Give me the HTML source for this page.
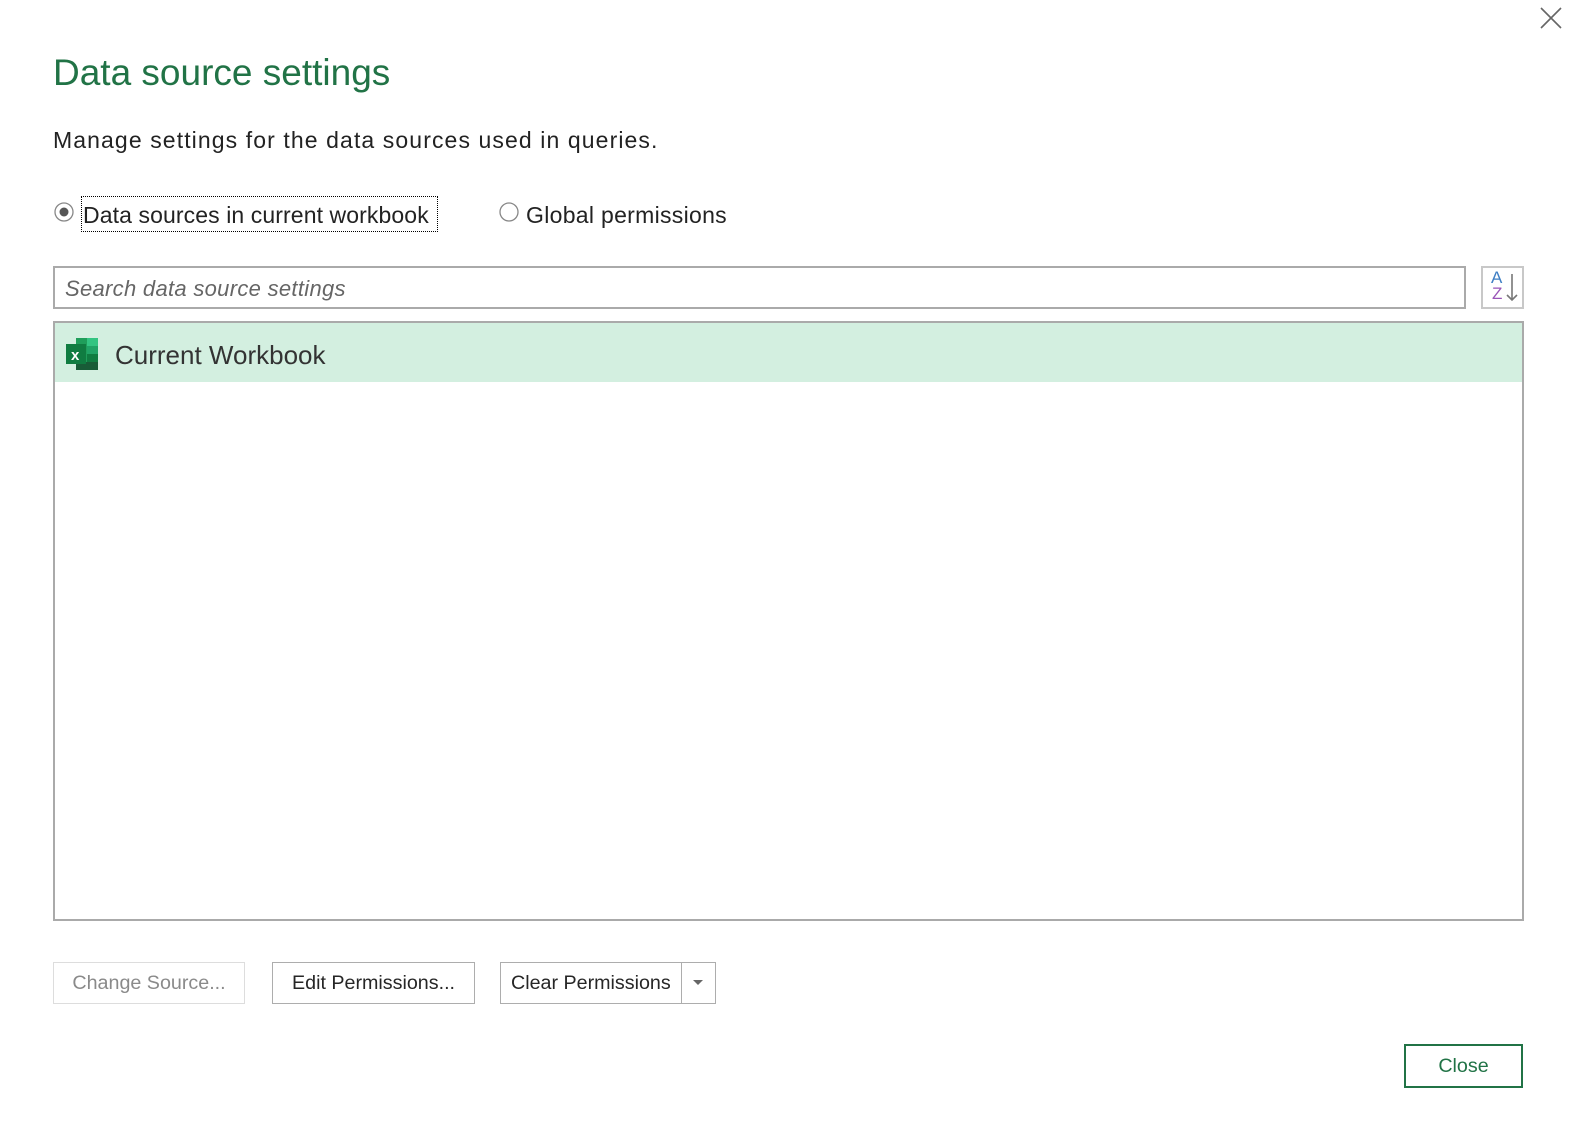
<!DOCTYPE html>
<html><head><meta charset="utf-8"><style>
body{margin:0;width:1578px;height:1136px;background:#fff;position:relative;font-family:"Liberation Sans",sans-serif;color:#333;overflow:hidden}
.a{position:absolute;white-space:nowrap}
.btn{position:absolute;box-sizing:border-box;border:1px solid #adadad;background:#fff;font-size:19.7px;text-align:center;line-height:40px;color:#262626}
</style></head><body>
<svg class="a" style="left:1539px;top:6px" width="24" height="24"><path d="M2 2L22 22M22 2L2 22" stroke="#666" stroke-width="1.6"/></svg>
<div class="a" style="left:53px;top:52px;font-size:37px;color:#217346;font-weight:300">Data source settings</div>
<div class="a" style="left:53px;top:127px;font-size:23px;color:#222;letter-spacing:1.1px">Manage settings for the data sources used in queries.</div>
<svg class="a" style="left:53px;top:201px" width="22" height="22"><circle cx="11" cy="11" r="9" fill="#fff" stroke="#888" stroke-width="1.3"/><circle cx="11" cy="11" r="4.5" fill="#555"/></svg>
<div class="a" style="left:81px;top:196px;width:357px;height:36px;border:1px dotted #000;box-sizing:border-box"></div>
<div class="a" style="left:83px;top:202px;font-size:23px;color:#222;letter-spacing:0.1px">Data sources in current workbook</div>
<svg class="a" style="left:498px;top:201px" width="22" height="22"><circle cx="11" cy="11" r="9" fill="#fff" stroke="#888" stroke-width="1.3"/></svg>
<div class="a" style="left:526px;top:202px;font-size:23px;color:#222;letter-spacing:0.3px">Global permissions</div>
<div class="a" style="left:53px;top:266px;width:1413px;height:43px;border:2px solid #aaa;box-sizing:border-box"></div>
<div class="a" style="left:65px;top:276px;font-size:22px;font-style:italic;color:#666;letter-spacing:0.3px">Search data source settings</div>
<div class="a" style="left:1481px;top:266px;width:43px;height:43px;border:2px solid #c8c8c8;box-sizing:border-box"></div>
<div class="a" style="left:1491px;top:270px;font-size:17px;line-height:16px;color:#3f7fc4">A</div>
<div class="a" style="left:1492px;top:286px;font-size:17px;line-height:16px;color:#9a55b8">Z</div>
<svg class="a" style="left:1504px;top:272px" width="16" height="32"><path d="M8 2V28M3 23L8 28L13 23" stroke="#777" stroke-width="1.6" fill="none"/></svg>
<div class="a" style="left:53px;top:321px;width:1471px;height:600px;border:2px solid #aaa;box-sizing:border-box"></div>
<div class="a" style="left:55px;top:323px;width:1467px;height:59px;background:#d3efe0"></div>
<svg class="a" style="left:66px;top:338px" width="34" height="32"><rect x="10" y="0" width="22" height="32" fill="#1f9e5a"/><rect x="21" y="0" width="11" height="8" fill="#33c481"/><rect x="21" y="8" width="11" height="8" fill="#21a366"/><rect x="21" y="16" width="11" height="8" fill="#107c41"/><rect x="10" y="24" width="22" height="8" fill="#185c37"/><rect x="0" y="6" width="20" height="20" fill="#107c41"/><text x="5" y="22" font-size="15" font-weight="bold" fill="#fff" font-family="Liberation Sans">x</text></svg>
<div class="a" style="left:115px;top:340px;font-size:26px;color:#333">Current Workbook</div>
<div class="btn" style="left:53px;top:962px;width:192px;height:42px;border-color:#ddd;color:#8a8a8a">Change Source...</div>
<div class="btn" style="left:272px;top:962px;width:203px;height:42px">Edit Permissions...</div>
<div class="btn" style="left:500px;top:962px;width:216px;height:42px;text-align:left;padding-left:10px">Clear Permissions</div>
<div class="a" style="left:681px;top:963px;width:1px;height:40px;background:#adadad"></div>
<svg class="a" style="left:692px;top:979px" width="12" height="8"><path d="M1 1H11L6 6Z" fill="#666"/></svg>
<div class="btn" style="left:1404px;top:1044px;width:119px;height:44px;border:2px solid #217346;color:#217346;line-height:40px">Close</div>
</body></html>
